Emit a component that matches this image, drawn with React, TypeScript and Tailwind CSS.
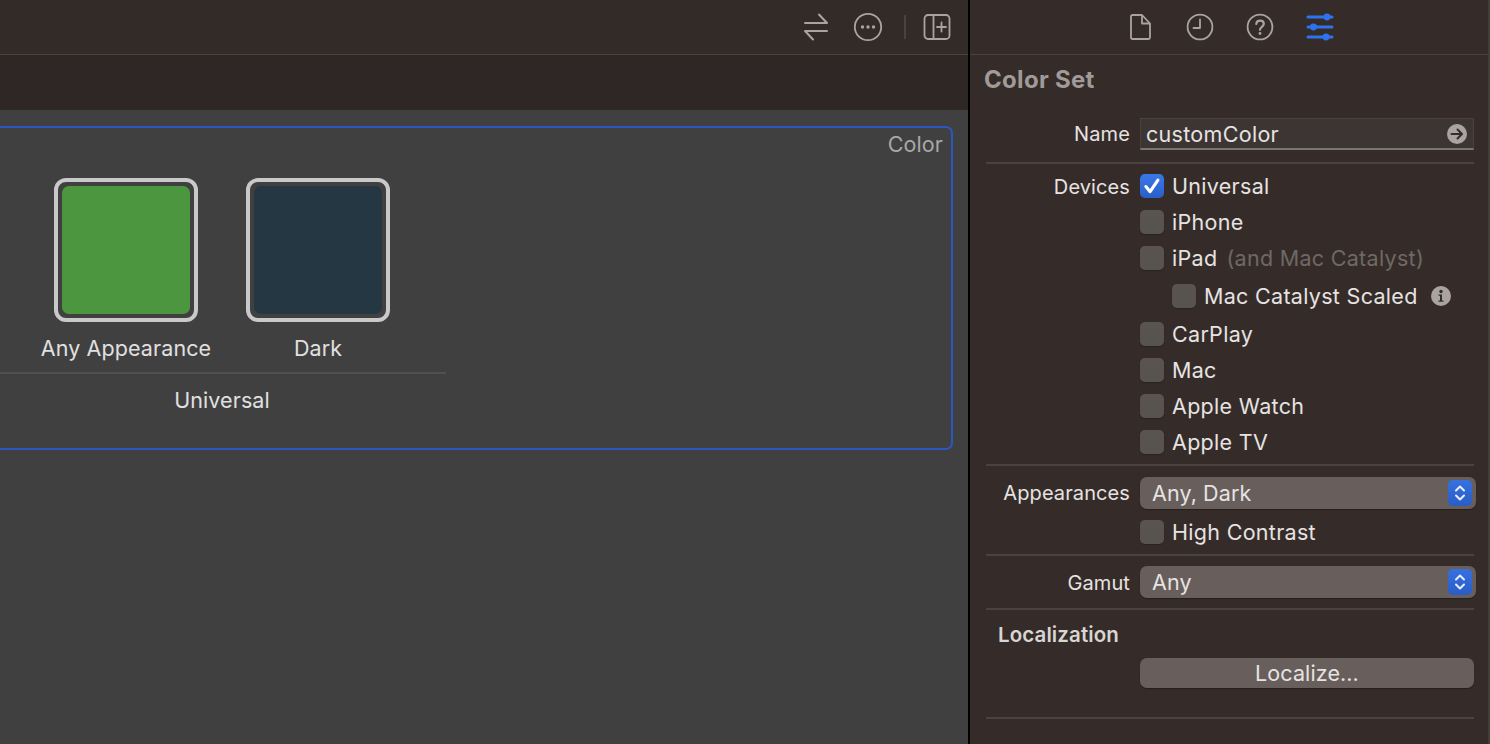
const font = { fontFamily: "Inter, 'Noto Sans', sans-serif" };

function Check({ on = false }: { on?: boolean }) {
  if (on) {
    return (
      <span className="flex h-[24px] w-[24px] shrink-0 items-center justify-center rounded-[5px] bg-gradient-to-b from-[#3a78e8] to-[#2a5fc9]">
        <svg width="20" height="20" viewBox="0 0 18 18" fill="none">
          <path d="M3.5 9.5l3.8 4.6 7-10.4" stroke="#fff" strokeWidth="2.8" strokeLinecap="round" strokeLinejoin="round" />
        </svg>
      </span>
    );
  }
  return <span className="h-[24px] w-[24px] shrink-0 rounded-[5px] bg-gradient-to-b from-[#5a5351] to-[#565350] shadow-[0_1px_1px_rgba(0,0,0,0.25)]" />;
}

function Device({ label, h = "h-[36px]" }: { label: string; h?: string }) {
  return (
    <div className={`flex items-center gap-[8px] tracking-[0.3px] ${h}`}>
      <Check />
      <span>{label}</span>
    </div>
  );
}

function Stepper() {
  return (
    <span className="flex h-[26px] w-[24px] items-center justify-center rounded-[5px] bg-gradient-to-b from-[#3671e0] to-[#2a5cc5]">
      <svg width="14" height="18" viewBox="0 0 14 18" fill="none" stroke="#e8eefc" strokeWidth="2" strokeLinecap="round" strokeLinejoin="round">
        <path d="M3 6.5L7 2.5l4 4" />
        <path d="M3 11.5l4 4 4-4" />
      </svg>
    </span>
  );
}

function Popup({ value }: { value: string }) {
  return (
    <div className="flex h-[32px] w-[336px] items-center justify-between rounded-[7px] bg-[#685f5c] pl-[12px] pr-[4px] text-[#e6e3e2] shadow-[0_1px_1px_rgba(0,0,0,0.3)]">
      <span>{value}</span>
      <Stepper />
    </div>
  );
}

function Swatch({ label, color }: { label: string; color: string }) {
  return (
    <div className="flex w-[192px] flex-col items-center">
      <div className="flex h-[144px] w-[144px] items-center justify-center rounded-[12px] border-[4px] border-[#c9c9c9]">
        <div className="h-[128px] w-[128px] rounded-[7px]" style={{ backgroundColor: color }} />
      </div>
      <div className="mt-[12px] text-[#e0e0e0]">{label}</div>
    </div>
  );
}

export default function App() {
  return (
    <div className="flex h-[744px] w-[1490px] overflow-hidden bg-black text-[21.5px] leading-[28px] tracking-[0.1px]" style={font}>
      {/* editor side */}
      <div className="flex h-full w-[968px] flex-col overflow-hidden">
        <div className="flex h-[55px] shrink-0 items-center justify-end border-b border-[#4a4240] bg-[#332b28] pr-[17px] text-[#a9a4a2]">
          <svg width="28" height="28" viewBox="0 0 28 28" fill="none" stroke="currentColor" strokeWidth="2" strokeLinecap="round" strokeLinejoin="round">
            <path d="M3 10h22l-8-8.500" />
            <path d="M25 18H3l8 8.500" />
          </svg>
          <svg className="ml-[23px]" width="30" height="30" viewBox="0 0 30 30" fill="none">
            <circle cx="15" cy="15" r="13.2" stroke="currentColor" strokeWidth="1.8" />
            <circle cx="9.5" cy="15" r="1.7" fill="currentColor" />
            <circle cx="15" cy="15" r="1.7" fill="currentColor" />
            <circle cx="20.5" cy="15" r="1.7" fill="currentColor" />
          </svg>
          <span className="ml-[21px] h-[24px] w-[2px] bg-[#4a4240]" />
          <svg className="ml-[17px]" width="28" height="28" viewBox="0 0 28 28" fill="none" stroke="currentColor" strokeWidth="1.8" strokeLinecap="round">
            <rect x="1.5" y="2" width="25" height="24" rx="3.5" />
            <path d="M10.5 2v24" />
            <path d="M18.5 9.5v9M14 14h9" />
          </svg>
        </div>
        <div className="h-[55px] shrink-0 bg-[#2f2725]" />
        <div className="flex-1 bg-[#404040] pt-[16px]">
          <div className="relative ml-[-10px] mr-[15px] h-[324px] rounded-[7px] border-2 border-[#2a57c0] pl-[6px] pt-[50px]">
            <span className="absolute right-[8px] top-[2px] text-[#a8a8a8]">Color</span>
            <div className="w-[448px]">
              <div className="flex justify-center">
                <Swatch label="Any Appearance" color="#4c963f" />
                <Swatch label="Dark" color="#253742" />
              </div>
              <div className="mt-[10px] h-[2px] bg-[#505050]" />
              <div className="mt-[12px] text-center text-[#e0e0e0]">Universal</div>
            </div>
          </div>
        </div>
      </div>

      <div className="w-[2px] shrink-0 bg-black" />

      {/* inspector */}
      <div className="flex h-full flex-1 flex-col border-r-2 border-[#443c39] bg-[#352c29] text-[#e6e3e2]">
        <div className="flex h-[55px] shrink-0 items-center justify-center gap-[32px] border-b border-[#4a4240] pl-[2px] text-[#a9a4a2]">
          <svg width="28" height="28" viewBox="0 0 28 28" fill="none" stroke="currentColor" strokeWidth="1.8" strokeLinejoin="round">
            <path d="M5 3.5C5 2.7 5.7 2 6.5 2H16l8 8.5V24.500c0 .8-.7 1.500-1.500 1.500h-16C5.700 26 5 25.300 5 24.500z" />
            <path d="M16 2v8.500h8" />
          </svg>
          <svg width="28" height="28" viewBox="0 0 28 28" fill="none" stroke="currentColor" strokeWidth="1.8" strokeLinecap="round" strokeLinejoin="round">
            <circle cx="14" cy="14" r="12.400" />
            <path d="M14 6.500V15H7.500" />
          </svg>
          <svg width="28" height="28" viewBox="0 0 28 28" fill="none" stroke="currentColor" strokeWidth="1.8" strokeLinecap="round">
            <circle cx="14" cy="14" r="12.400" />
            <path d="M10.300 11c.2-2.200 1.800-3.400 3.800-3.400 2.100 0 3.700 1.300 3.700 3.200 0 3-3.800 3-3.800 6" strokeWidth="2.200" />
            <circle cx="14" cy="20.500" r="1.400" fill="currentColor" stroke="none" />
          </svg>
          <svg width="28" height="28" viewBox="0 0 28 28" fill="#2e73ee" stroke="#2e73ee" strokeLinecap="round">
            <path d="M2 4h24M2 14h24M2 24h24" strokeWidth="3" />
            <circle cx="21" cy="4" r="3.400" stroke="none" />
            <circle cx="7.500" cy="14" r="3.400" stroke="none" />
            <circle cx="20" cy="24" r="3.400" stroke="none" />
          </svg>
        </div>

        <div className="mt-[11px] h-[28px] pl-[14px] text-[24px] font-bold tracking-[0.3px] text-[#a09a98]">Color Set</div>

        <div className="mt-[24px] flex items-center pl-[16px]">
          <span className="w-[144px] text-right text-[20px]">Name</span>
          <div className="ml-[10px] flex h-[32px] w-[334px] items-center justify-between border border-b-2 border-[#4a4240] border-b-[#7a7472] bg-[#3d3533] pl-[5px] pr-[6px] tracking-[0.3px]">
            <span>customColor</span>
            <svg width="20" height="20" viewBox="0 0 20 20" fill="none">
              <circle cx="10" cy="10" r="10" fill="#a9a4a2" />
              <path d="M4.500 10h10.500M10.500 5.500l4.500 4.500-4.500 4.500" stroke="#352c29" strokeWidth="2" strokeLinecap="round" strokeLinejoin="round" />
            </svg>
          </div>
        </div>
        <div className="ml-[16px] mt-[12px] h-[2px] w-[488px] bg-[#4a4240]" />

        <div className="mt-[4px] flex pl-[16px]">
          <span className="w-[144px] pt-[5px] text-right text-[20px]">Devices</span>
          <div className="ml-[10px] flex-1">
            <div className="flex h-[36px] items-center gap-[8px] tracking-[0.3px]">
              <Check on />
              <span>Universal</span>
            </div>
            <Device label="iPhone" />
            <div className="flex h-[36px] items-center gap-[8px] tracking-[0.3px]">
              <Check />
              <span>iPad</span>
              <span className="ml-[1px] text-[#6f6866]">(and Mac Catalyst)</span>
            </div>
            <div className="flex h-[40px] items-center gap-[8px] pl-[32px] tracking-[0.3px]">
              <Check />
              <span>Mac Catalyst Scaled</span>
              <svg className="ml-[5px]" width="20" height="20" viewBox="0 0 20 20">
                <circle cx="10" cy="10" r="10" fill="#a9a4a2" />
                <circle cx="10" cy="5.500" r="1.700" fill="#352c29" />
                <path d="M7.500 8.500H11v6h1.500v1.300h-5v-1.300H9V9.800H7.500z" fill="#352c29" />
              </svg>
            </div>
            <Device label="CarPlay" />
            <Device label="Mac" />
            <Device label="Apple Watch" />
            <Device label="Apple TV" />
          </div>
        </div>
        <div className="ml-[16px] mt-[4px] h-[2px] w-[488px] bg-[#4a4240]" />

        <div className="mt-[11px] flex items-center pl-[16px]">
          <span className="w-[144px] text-right text-[20px]">Appearances</span>
          <div className="ml-[10px]">
            <Popup value="Any, Dark" />
          </div>
        </div>
        <div className="mt-[5px] flex h-[36px] items-center gap-[8px] pl-[170px] tracking-[0.3px]">
          <Check />
          <span>High Contrast</span>
        </div>
        <div className="ml-[16px] mt-[4px] h-[2px] w-[488px] bg-[#4a4240]" />

        <div className="mt-[10px] flex items-center pl-[16px]">
          <span className="w-[144px] pt-[1px] text-right text-[20px]">Gamut</span>
          <div className="ml-[10px]">
            <Popup value="Any" />
          </div>
        </div>
        <div className="ml-[16px] mt-[10px] h-[2px] w-[488px] bg-[#4a4240]" />

        <div className="mt-[11px] h-[28px] pl-[28px] text-[20.500px] font-semibold text-[#d9d5d3]">Localization</div>
        <div className="mt-[9px] pl-[170px]">
          <div className="flex h-[30px] w-[334px] items-center justify-center rounded-[7px] bg-[#685f5c] shadow-[0_1px_1px_rgba(0,0,0,0.3)]">Localize...</div>
        </div>
        <div className="ml-[16px] mt-[29px] h-[2px] w-[488px] bg-[#4a4240]" />
      </div>
    </div>
  );
}
